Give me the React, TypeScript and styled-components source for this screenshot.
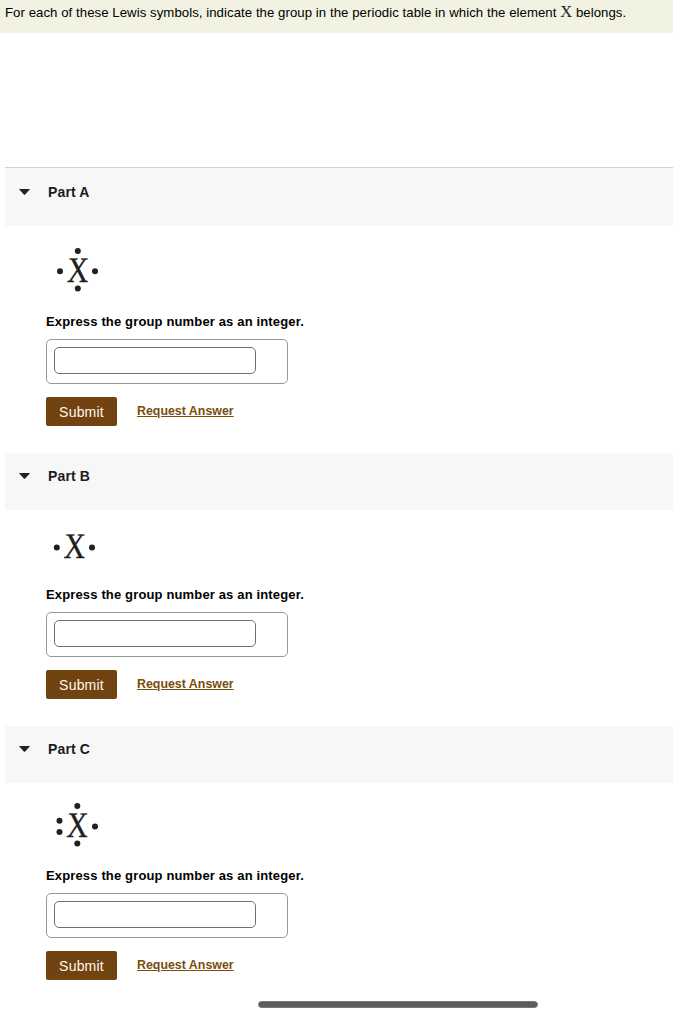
import React from "react";
import styled, { createGlobalStyle } from "styled-components";

const GlobalStyle = createGlobalStyle`
  * { box-sizing: border-box; }
  body {
    margin: 0;
    background: #fff;
    color: #000;
    font-family: "Liberation Sans", Arial, sans-serif;
    font-size: 13px;
    overflow: hidden;
  }
`;

const Page = styled.div`
  height: 1012px;
  display: flex;
  flex-direction: column;
`;

const Question = styled.p`
  flex: none;
  margin: 0 0 134px;
  height: 33px;
  padding: 3px 0 0 5px;
  background: #f2f2e2;
  font-size: 13.2px;
  line-height: 20px;
  letter-spacing: 0.057px;
  white-space: nowrap;
`;

const MathSymbol = styled.span`
  font-family: "Liberation Serif", serif;
  font-size: 16.5px;
  line-height: 1;
  color: #222;
`;

const Part = styled.section`
  flex: none;
  display: flex;
  flex-direction: column;
`;

const PartHeader = styled.header<{ $first: boolean; $height: number }>`
  display: flex;
  align-items: flex-start;
  height: ${(p) => p.$height}px;
  margin-left: 5px;
  padding: ${(p) => (p.$first ? 15 : 14)}px 0 0 14px;
  gap: 18px;
  background: #f7f7f7;
  border-top: ${(p) => (p.$first ? "1px solid #d2d2d2" : "none")};
`;

const Caret = styled.svg`
  display: block;
  width: 11px;
  height: 6px;
  margin-top: 6px;
  fill: #222;
`;

const PartTitle = styled.h2`
  margin: 0;
  font-size: 14px;
  line-height: 18px;
  letter-spacing: 0.15px;
  color: #1c1c1c;
`;

const PartBody = styled.div`
  display: flex;
  flex-direction: column;
  align-items: flex-start;
  padding: 0 0 27px 46px;
`;

const LewisDrawing = styled.svg`
  display: block;
  width: 60px;
  fill: #202020;
  font-family: "Liberation Serif", serif;
  font-size: 36px;
`;

const Instruction = styled.p`
  margin: 0 0 9px;
  font-size: 13px;
  font-weight: bold;
  line-height: 17px;
  letter-spacing: 0.148px;
  white-space: nowrap;
`;

const AnswerBox = styled.div`
  width: 242px;
  height: 45px;
  padding: 7px;
  border: 1px solid #999;
  border-radius: 5px;
`;

const AnswerInput = styled.input`
  display: block;
  width: 202px;
  height: 27px;
  margin: 0;
  border: 1px solid #707070;
  border-radius: 5px;
  background: #fff;
`;

const Actions = styled.div`
  display: flex;
  align-items: center;
  gap: 20px;
  margin-top: 13px;
`;

const SubmitButton = styled.button`
  width: 71px;
  height: 29px;
  padding: 0;
  border: 0;
  border-radius: 2px;
  background: #714311;
  color: #fff8ea;
  font: 14px "Liberation Sans", Arial, sans-serif;
  letter-spacing: 0.2px;
`;

const RequestLink = styled.a`
  color: #7a4d0c;
  font-size: 12.4px;
  font-weight: bold;
  line-height: 17px;
  text-decoration: underline;
  white-space: nowrap;
`;

const ScrollThumb = styled.div`
  flex: none;
  width: 280px;
  height: 7px;
  margin: -6px 0 0 258px;
  border: 1px solid #777;
  border-radius: 4px;
  background: #5c5c5c;
`;

interface LewisPart {
  name: string;
  headerHeight: number;
  drawingHeight: number;
  center: number;
  baseline: number;
  dots: [number, number][];
}

const parts: LewisPart[] = [
  {
    name: "Part A",
    headerHeight: 59,
    drawingHeight: 87,
    center: 31.4,
    baseline: 56.3,
    dots: [[31.8, 25], [14, 45.3], [49, 45.3], [31.8, 62.4]],
  },
  {
    name: "Part B",
    headerHeight: 57,
    drawingHeight: 76,
    center: 28.2,
    baseline: 47.9,
    dots: [[10.8, 37.5], [46, 37.5]],
  },
  {
    name: "Part C",
    headerHeight: 57,
    drawingHeight: 84,
    center: 30.9,
    baseline: 54,
    dots: [[31.3, 23], [13.5, 37.7], [13.5, 49], [49, 43.5], [31.3, 60.4]],
  },
];

function PartSection({ part, first }: { part: LewisPart; first: boolean }) {
  return (
    <Part>
      <PartHeader $first={first} $height={part.headerHeight}>
        <Caret viewBox="0 0 11 6">
          <path d="M.5 0h10q.7 0 .2.6L6.2 5.5q-.7.7-1.4 0L.3.6Q-.2 0 .5 0Z" />
        </Caret>
        <PartTitle>{part.name}</PartTitle>
      </PartHeader>
      <PartBody>
        <LewisDrawing height={part.drawingHeight} viewBox={`0 0 60 ${part.drawingHeight}`}>
          <text
            transform={`translate(${part.center} ${part.baseline}) skewX(-3) scale(.82 1)`}
            textAnchor="middle"
            stroke="#202020"
            strokeWidth=".3"
          >
            X
          </text>
          {part.dots.map(([x, y]) => (
            <circle key={`${x}-${y}`} cx={x} cy={y} r="3" />
          ))}
        </LewisDrawing>
        <Instruction>Express the group number as an integer.</Instruction>
        <AnswerBox>
          <AnswerInput aria-label={`${part.name} answer`} />
        </AnswerBox>
        <Actions>
          <SubmitButton>Submit</SubmitButton>
          <RequestLink>Request Answer</RequestLink>
        </Actions>
      </PartBody>
    </Part>
  );
}

export default function App() {
  return (
    <>
      <GlobalStyle />
      <Page>
        <Question>
          For each of these Lewis symbols, indicate the group in the periodic table in which the element{" "}
          <MathSymbol>X</MathSymbol> belongs.
        </Question>
        {parts.map((part, i) => (
          <PartSection key={part.name} part={part} first={i === 0} />
        ))}
        <ScrollThumb />
      </Page>
    </>
  );
}
